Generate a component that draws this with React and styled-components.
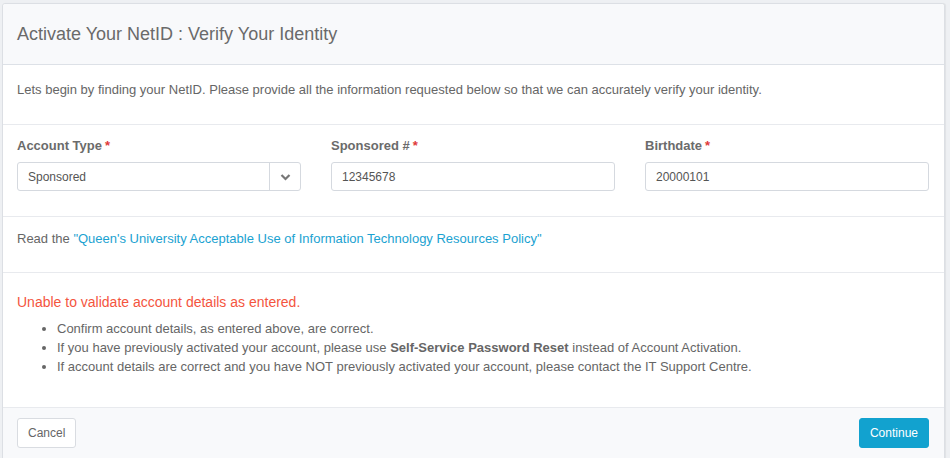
import React from "react";
import styled, { createGlobalStyle } from "styled-components";

const Global = createGlobalStyle`
  html, body { margin: 0; padding: 0; background: #eef0f3; }
  body { font-family: "Liberation Sans", Arial, sans-serif; color: #666; }
  * { box-sizing: border-box; }
`;

const Page = styled.div`
  padding: 3px 0 0 2px;
  height: 458px;
  overflow: hidden;
`;

const Card = styled.div`
  width: 943px;
  background: #fff;
  border: 1px solid #dcdfe4;
  border-radius: 3px;
  box-shadow: 1px 0 1px rgba(0,0,0,0.06);
`;

const Header = styled.div`
  height: 61px;
  background: #f8f9fb;
  border-bottom: 1px solid #dde1e7;
  display: flex;
  align-items: center;
  padding: 0 14px 0 14px;
  border-radius: 3px 3px 0 0;
`;

const Title = styled.h1`
  margin: 0;
  font-size: 18px;
  font-weight: 400;
  color: #6a6a6a;
`;

const Section = styled.div`
  padding: ${p => p.$pt}px 15px ${p => p.$pb}px 14px;
  border-bottom: 1px solid #e8eaee;
  font-size: 13px;
  line-height: 18px;
`;

const Para = styled.p`
  margin: 0;
`;

const FormRow = styled.div`
  display: grid;
  grid-template-columns: repeat(3, 284px);
  column-gap: 30px;
`;

const Field = styled.div`
  display: flex;
  flex-direction: column;
`;

const Label = styled.label`
  font-weight: 700;
  font-size: 13px;
  line-height: 18px;
  margin-bottom: 7px;
  color: #6b6b6b;
`;

const Req = styled.span`
  color: #e03a3a;
  margin-left: 3px;
`;

const InputBox = styled.div`
  height: 29px;
  border: 1px solid #d5d9df;
  border-radius: 3px;
  display: flex;
  align-items: center;
  font-size: 12px;
  color: #555;
  background: #fff;
`;

const InputText = styled.span`
  flex: 1;
  padding-left: 10px;
`;

const Caret = styled.span`
  width: 31px;
  height: 100%;
  border-left: 1px solid #d5d9df;
  display: flex;
  align-items: center;
  justify-content: center;
`;

const Link = styled.a`
  color: #1ba2d1;
  text-decoration: none;
`;

const ErrorText = styled.div`
  color: #f4553e;
  font-size: 14px;
  line-height: 18px;
  margin-bottom: 8px;
`;

const List = styled.ul`
  margin: 0;
  padding-left: 40px;
  line-height: 19px;
`;

const Footer = styled.div`
  background: #f8f9fb;
  padding: 10px 15px 15px 14px;
  display: flex;
  justify-content: space-between;
`;

const Button = styled.button`
  height: 30px;
  padding: 0 10px;
  border-radius: 3px;
  font-family: "Liberation Sans", Arial, sans-serif;
  font-size: 12px;
  border: 1px solid ${p => (p.$primary ? "#12a2cf" : "#d9dce1")};
  background: ${p => (p.$primary ? "#12a2cf" : "#fff")};
  color: ${p => (p.$primary ? "#fff" : "#666")};
  cursor: pointer;
`;

const Chevron = () => (
  <svg width="11" height="8" viewBox="0 0 11 8">
    <path d="M1.5 2 L5.5 6 L9.5 2" fill="none" stroke="#777" strokeWidth="2.2" />
  </svg>
);

export default function App() {
  return (
    <>
      <Global />
      <Page>
        <Card>
          <Header>
            <Title>Activate Your NetID : Verify Your Identity</Title>
          </Header>
          <Section $pt={16} $pb={25}>
            <Para>
              Lets begin by finding your NetID. Please provide all the information requested below so that we can accurately verify your identity.
            </Para>
          </Section>
          <Section $pt={12} $pb={25}>
            <FormRow>
              <Field>
                <Label>Account Type<Req>*</Req></Label>
                <InputBox>
                  <InputText>Sponsored</InputText>
                  <Caret><Chevron /></Caret>
                </InputBox>
              </Field>
              <Field>
                <Label>Sponsored #<Req>*</Req></Label>
                <InputBox><InputText>12345678</InputText></InputBox>
              </Field>
              <Field>
                <Label>Birthdate<Req>*</Req></Label>
                <InputBox><InputText>20000101</InputText></InputBox>
              </Field>
            </FormRow>
          </Section>
          <Section $pt={13} $pb={24}>
            <Para>
              Read the <Link href="#">"Queen's University Acceptable Use of Information Technology Resources Policy"</Link>
            </Para>
          </Section>
          <Section $pt={20} $pb={31}>
            <ErrorText>Unable to validate account details as entered.</ErrorText>
            <List>
              <li>Confirm account details, as entered above, are correct.</li>
              <li>If you have previously activated your account, please use <b>Self-Service Password Reset</b> instead of Account Activation.</li>
              <li>If account details are correct and you have NOT previously activated your account, please contact the IT Support Centre.</li>
            </List>
          </Section>
          <Footer>
            <Button>Cancel</Button>
            <Button $primary>Continue</Button>
          </Footer>
        </Card>
      </Page>
    </>
  );
}
